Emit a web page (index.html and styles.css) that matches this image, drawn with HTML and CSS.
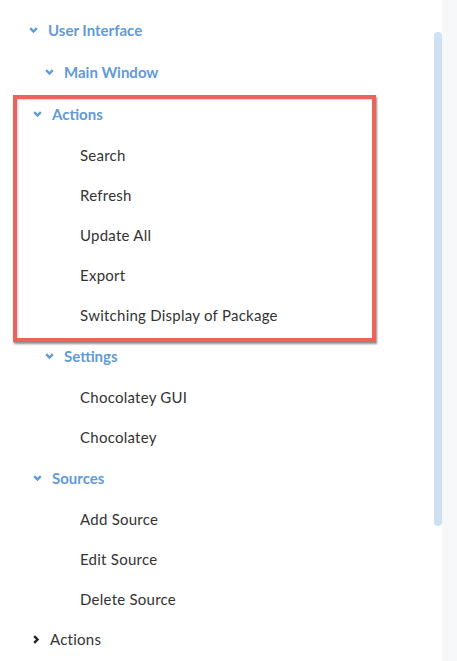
FILE: index.html
```html
<!DOCTYPE html>
<html lang="en">
<head>
<meta charset="utf-8">
<title>Docs navigation</title>
<link rel="stylesheet" href="styles.css">
</head>
<body>
<div class="page">
  <nav class="tree">
    <div class="row head lvl0"><svg class="chev" viewBox="0 0 9 7"><polyline points="1.2,1.2 4.5,4.5 7.8,1.2"/></svg><span>User Interface</span></div>
    <div class="row head lvl1"><svg class="chev" viewBox="0 0 9 7"><polyline points="1.2,1.2 4.5,4.5 7.8,1.2"/></svg><span>Main Window</span></div>
    <div class="row head lvl2"><svg class="chev" viewBox="0 0 9 7"><polyline points="1.2,1.2 4.5,4.5 7.8,1.2"/></svg><span>Actions</span></div>
    <div class="row leaf">Search</div>
    <div class="row leaf">Refresh</div>
    <div class="row leaf">Update All</div>
    <div class="row leaf">Export</div>
    <div class="row leaf">Switching Display of Package</div>
    <div class="row head lvl1"><svg class="chev" viewBox="0 0 9 7"><polyline points="1.2,1.2 4.5,4.5 7.8,1.2"/></svg><span>Settings</span></div>
    <div class="row leaf">Chocolatey GUI</div>
    <div class="row leaf">Chocolatey</div>
    <div class="row head lvl2"><svg class="chev" viewBox="0 0 9 7"><polyline points="1.2,1.2 4.5,4.5 7.8,1.2"/></svg><span>Sources</span></div>
    <div class="row leaf">Add Source</div>
    <div class="row leaf">Edit Source</div>
    <div class="row leaf">Delete Source</div>
    <div class="row closed lvl2"><svg class="chev-r" viewBox="0 0 7 9"><polyline points="1.2,1.2 4.5,4.5 1.2,7.8"/></svg><span>Actions</span></div>
  </nav>
  <div class="track"></div>
  <div class="thumb"></div>
  <div class="highlight"></div>
</div>
</body>
</html>
```

FILE: styles.css
```css
html, body {
  margin: 0;
  padding: 0;
  background: #ffffff;
}
body {
  font-family: "Lato", "Noto Sans", sans-serif;
  font-size: 15px;
  color: #333333;
}
.page {
  position: relative;
  display: flex;
  width: 457px;
  height: 661px;
  overflow: hidden;
}
.tree {
  flex: 1;
  padding-top: 9px;
}
.row {
  display: flex;
  align-items: center;
  height: 40px;
  white-space: nowrap;
}
.head {
  height: 42px;
  color: #5f9bd7;
  font-weight: 700;
}
.head span {
  margin-top: -1px;
}
.leaf {
  padding-left: 80px;
  letter-spacing: 0.25px;
}
.lvl0 { padding-left: 29px; }
.lvl1 { padding-left: 45px; }
.lvl2 { padding-left: 33px; }
.closed {
  color: #333333;
  letter-spacing: 0.25px;
}
.chev {
  width: 9px;
  height: 7px;
  margin-right: 10px;
  fill: none;
  stroke: #5f9bd7;
  stroke-width: 2.4;
}
.chev-r {
  width: 7px;
  height: 9px;
  margin-right: 10px;
  fill: none;
  stroke: #222222;
  stroke-width: 2.4;
}
.track {
  width: 15px;
  background: #f7f8fa;
}
.thumb {
  position: absolute;
  left: 434px;
  top: 32px;
  width: 8px;
  height: 494px;
  border-radius: 4px;
  background: #cfe0f2;
}
.highlight {
  position: absolute;
  left: 13px;
  top: 95px;
  width: 355px;
  height: 239px;
  border: 4px solid #e9655a;
  box-shadow: 1px 2px 2px rgba(0, 0, 0, 0.45), inset 1px 1px 2px rgba(0, 0, 0, 0.2);
  pointer-events: none;
}
```
